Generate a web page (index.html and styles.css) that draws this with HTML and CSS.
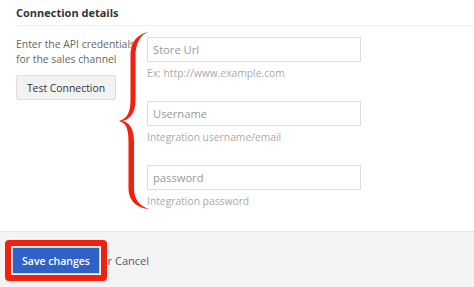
FILE: index.html
```html
<!DOCTYPE html>
<html lang="en">
<head>
    <meta charset="UTF-8">
    <meta name="viewport" content="width=device-width, initial-scale=1.0">
    <title>Connection details</title>
    <link rel="stylesheet" href="styles.css">
</head>
<body>

    <!-- Connection panel -->
    <div class="panel">
        <h2 class="panel-title">Connection details</h2>
        <div class="panel-body">
            <div class="side">
                <p class="side-text">Enter the API credentials<br>for the sales channel</p>
                <button class="btn">Test Connection</button>
            </div>
            <div class="fields">
                <div class="field">
                    <input type="text" placeholder="Store Url" />
                    <div class="hint">Ex: http://www.example.com</div>
                </div>
                <div class="field">
                    <input type="text" placeholder="Username" />
                    <div class="hint">Integration username/email</div>
                </div>
                <div class="field">
                    <input type="password" placeholder="password" />
                    <div class="hint">Integration password</div>
                </div>
            </div>

            <!-- red annotation brace -->
            <svg class="brace" width="45" height="186" viewBox="0 0 45 186">
                <path fill="#f2200f" d="M38 4 C28 6 20 14 20.5 28 L20.5 72 C20.5 86 16 91 9 93 C16 95 18.5 100 18.5 114 L18.5 160 C18.5 174 28 180 39 181 C30 178 24 172 24 160 L24 114 C24 100 19 94 12 93 C19 92 25.5 86 25.5 72 L25.5 28 C25.5 16 30 7 38 4 Z"/>
            </svg>
        </div>
    </div>

    <!-- Footer -->
    <div class="footer">
        <button class="btn-primary">Save changes</button>
        <span class="or-cancel">or <a href="#">Cancel</a></span>
    </div>

</body>
</html>
```

FILE: styles.css
```css
body {
    margin: 0;
    font-family: "Open Sans", Arial, sans-serif;
    background-color: white;
    color: #666;
    overflow: hidden;
}

.panel {
    padding: 0 0 0 16px;
}

.panel-title {
    margin: 0;
    padding: 4px 0 3px;
    font-size: 11px;
    line-height: 18px;
    font-weight: 700;
    color: #333;
    border-bottom: 1px solid #eee;
}

.panel-body {
    display: flex;
    padding: 11px 0 22px;
    position: relative;
}

.side {
    width: 131px;
    flex-shrink: 0;
}

.side-text {
    margin: 0;
    font-size: 10.4px;
    line-height: 15px;
    white-space: nowrap;
}

.btn {
    margin-top: 8px;
    height: 25px;
    width: 100px;
    padding: 0;
    font-family: inherit;
    font-size: 10.4px;
    color: #333;
    background-color: #f2f2f2;
    border: 1px solid #ddd;
    border-radius: 2px;
}

.fields {
    display: flex;
    flex-direction: column;
    gap: 20px;
}

.field input {
    display: block;
    box-sizing: border-box;
    width: 214px;
    height: 25px;
    margin: 0;
    padding: 0 5px;
    font-family: inherit;
    font-size: 11.2px;
    border: 1px solid #ddd;
    border-radius: 0;
}

.field input::placeholder {
    color: #999;
}

.hint {
    margin-top: 3px;
    font-size: 10.3px;
    line-height: 16px;
    color: #aaa;
}

/* Annotation overlays */
.brace {
    position: absolute;
    left: 94px;
    top: 2px;
}

.footer {
    background-color: #f4f4f4;
    border-top: 1px solid #e6e6e6;
    padding: 15px 12px 20px;
    display: flex;
    align-items: center;
}

.btn-primary {
    position: relative;
    height: 27px;
    width: 88px;
    padding: 0;
    font-family: inherit;
    font-size: 10.5px;
    font-weight: 600;
    color: white;
    background-color: #3061c8;
    border: 1px solid #c9d6f0;
    border-radius: 1px;
}

.btn-primary::after {
    content: "";
    position: absolute;
    top: -8px;
    left: -8px;
    right: -8px;
    bottom: -8px;
    border: 6px solid #f2200f;
    border-radius: 4px;
    z-index: 2;
}

.or-cancel {
    margin-left: 1px;
    font-size: 11px;
    color: #4e5a70;
}

.or-cancel a {
    color: #4e5a70;
    text-decoration: none;
}
```
